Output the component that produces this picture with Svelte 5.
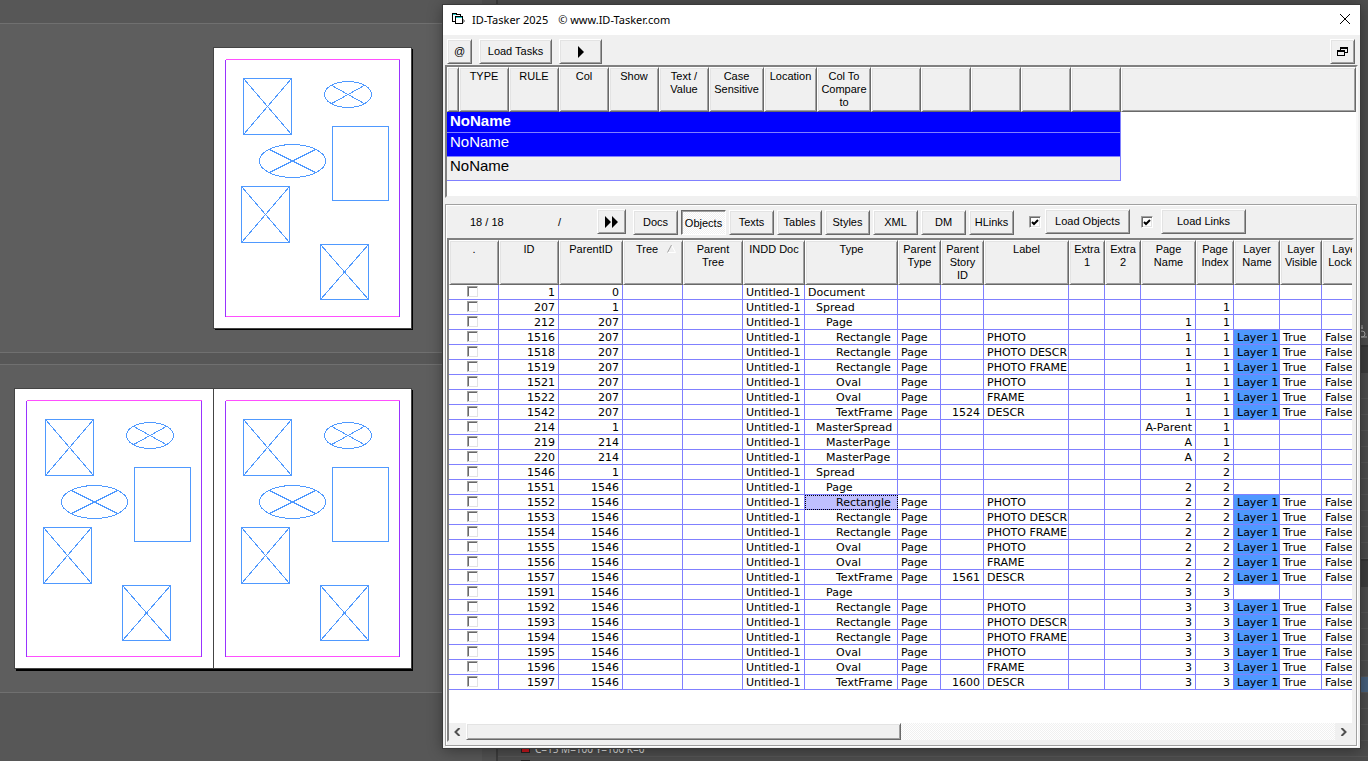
<script>
	const pageShapes = [
		{ kind: 'frame', x: 243, y: 78, w: 48, h: 56 },
		{ kind: 'oval', x: 324, y: 81, w: 47, h: 26 },
		{ kind: 'text', x: 332, y: 126, w: 56, h: 74 },
		{ kind: 'oval', x: 259, y: 144, w: 66, h: 33 },
		{ kind: 'frame', x: 241, y: 186, w: 48, h: 56 },
		{ kind: 'frame', x: 320, y: 244, w: 48, h: 55 },
	];

	const taskColumns = [
		['', 12], ['TYPE', 50], ['RULE', 50], ['Col', 50], ['Show', 50], ['Text / Value', 50],
		['Case Sensitive', 55], ['Location', 53], ['Col To Compare to', 54],
		['', 50], ['', 50], ['', 50], ['', 50], ['', 50],
	];

	const columns = [
		['.', 50], ['ID', 60], ['ParentID', 64], ['Tree', 60], ['Parent Tree', 60], ['INDD Doc', 62],
		['Type', 93], ['Parent Type', 43], ['Parent Story ID', 43], ['Label', 85], ['Extra 1', 36],
		['Extra 2', 36], ['Page Name', 55], ['Page Index', 38], ['Layer Name', 46],
		['Layer Visible', 42], ['Layer Locked', 48],
	];

	// id, parent id, level, type, story id, label, page name, page index
	const items = [
		[1, 0, 0, 'Document'],
		[207, 1, 1, 'Spread', '', '', '', 1],
		[212, 207, 2, 'Page', '', '', 1, 1],
		[1516, 207, 3, 'Rectangle', '', 'PHOTO', 1, 1],
		[1518, 207, 3, 'Rectangle', '', 'PHOTO DESCR', 1, 1],
		[1519, 207, 3, 'Rectangle', '', 'PHOTO FRAME', 1, 1],
		[1521, 207, 3, 'Oval', '', 'PHOTO', 1, 1],
		[1522, 207, 3, 'Oval', '', 'FRAME', 1, 1],
		[1542, 207, 3, 'TextFrame', 1524, 'DESCR', 1, 1],
		[214, 1, 1, 'MasterSpread', '', '', 'A-Parent', 1],
		[219, 214, 2, 'MasterPage', '', '', 'A', 1],
		[220, 214, 2, 'MasterPage', '', '', 'A', 2],
		[1546, 1, 1, 'Spread', '', '', '', 2],
		[1551, 1546, 2, 'Page', '', '', 2, 2],
		[1552, 1546, 3, 'Rectangle', '', 'PHOTO', 2, 2],
		[1553, 1546, 3, 'Rectangle', '', 'PHOTO DESCR', 2, 2],
		[1554, 1546, 3, 'Rectangle', '', 'PHOTO FRAME', 2, 2],
		[1555, 1546, 3, 'Oval', '', 'PHOTO', 2, 2],
		[1556, 1546, 3, 'Oval', '', 'FRAME', 2, 2],
		[1557, 1546, 3, 'TextFrame', 1561, 'DESCR', 2, 2],
		[1591, 1546, 2, 'Page', '', '', 3, 3],
		[1592, 1546, 3, 'Rectangle', '', 'PHOTO', 3, 3],
		[1593, 1546, 3, 'Rectangle', '', 'PHOTO DESCR', 3, 3],
		[1594, 1546, 3, 'Rectangle', '', 'PHOTO FRAME', 3, 3],
		[1595, 1546, 3, 'Oval', '', 'PHOTO', 3, 3],
		[1596, 1546, 3, 'Oval', '', 'FRAME', 3, 3],
		[1597, 1546, 3, 'TextFrame', 1600, 'DESCR', 3, 3],
	];

	const tabs = ['Docs', 'Objects', 'Texts', 'Tables', 'Styles', 'XML', 'DM', 'HLinks'];

	let tab = $state('Objects');
	let selected = $state(1552);
	let loadObjects = $state(true);
	let loadLinks = $state(true);
</script>

{#snippet page(dx, dy, left, bottom)}
	<g transform="translate({dx} {dy})">
		<rect class="paper" x={left} y="47" width={411 - left} height={bottom - 47} />
		<path class="margin-h" d="M{left + 12} 59H399M{left + 12} {bottom - 12}H399" />
		<path class="margin-v" d="M{left + 12} 59V{bottom - 12}M399 59V{bottom - 12}" />
		{#each pageShapes as s}
			{#if s.kind === 'oval'}
				<ellipse cx={s.x + s.w / 2} cy={s.y + s.h / 2} rx={s.w / 2} ry={s.h / 2} />
				<path
					d="M{s.x + s.w * 0.15} {s.y + s.h * 0.15}L{s.x + s.w * 0.85} {s.y + s.h * 0.85}M{s.x + s.w * 0.85} {s.y + s.h * 0.15}L{s.x + s.w * 0.15} {s.y + s.h * 0.85}"
				/>
			{:else}
				<rect x={s.x} y={s.y} width={s.w} height={s.h} />
				{#if s.kind === 'frame'}
					<path d="M{s.x} {s.y}l{s.w} {s.h}m0 {-s.h}l{-s.w} {s.h}" />
				{/if}
			{/if}
		{/each}
	</g>
{/snippet}

<div class="desktop">
	<div class="canvas">
		<div class="band first"></div>
		<svg class="board" width="443" height="328" viewBox="0 24 443 328">
			<rect class="shadow" x="215" y="49" width="198" height="281" />
			<g transform="translate(.5 .5)">{@render page(0, 0, 213, 328)}</g>
		</svg>
		<div class="band gutter"></div>
		<svg class="board" width="443" height="327" viewBox="0 365 443 327">
			<rect class="shadow" x="16" y="390" width="397" height="281" />
			<g transform="translate(.5 .5)">
				{@render page(-198, 341, 212, 327)}
				{@render page(0, 341, 213, 327)}
			</g>
		</svg>
		<div class="band last"></div>
	</div>
	<div class="track"></div>
	<div class="panel">
		<div class="panel-top">
			<svg width="14" height="16" viewBox="0 0 14 16">
				<path d="M4 2v6M4 5h5M8 2v4" />
				<circle cx="8" cy="11" r="3" />
				<path d="M3 14h10" />
			</svg>
		</div>
		<div class="panel-head"></div>
		<div class="panel-list tall">
			{#each Array(11) as _}<div class="swatch"></div>{/each}
		</div>
		<div class="panel-head"></div>
		<div class="panel-list">
			{#each Array(9) as _, i}<div class="swatch" class:current={i === 5}></div>{/each}
			<div class="swatch"><i></i>C=15 M=100 Y=100 K=0</div>
			<div class="swatch"><i class="dark"></i></div>
		</div>
	</div>

	<main class="window">
		<header class="titlebar">
			<svg class="logo" width="14" height="14" viewBox="0 0 14 14">
				<path d="M11 7h1v1h1v2h-1v1h-1z" fill="#999" />
				<path d="M.5 1.500h4v1h4v2h2v7h-7v-2h-3z" fill="#fff" stroke="#000" />
				<path d="M3.500 9.500v-5h7" fill="none" stroke="#000" />
				<path d="M1 2.500h3M4 5.500h6" stroke="#2cc" />
			</svg>
			<h1>ID-Tasker 2025</h1>
			<span>© www.ID-Tasker.com</span>
			<button class="close" aria-label="Close">
				<svg width="12" height="12" viewBox="0 0 12 12"><path d="M1 1l10 10M11 1L1 11" stroke="#000" /></svg>
			</button>
		</header>

		<div class="toolbar">
			<button class="btn square">@</button>
			<button class="btn load-tasks">Load Tasks</button>
			<button class="btn run" aria-label="Run">
				<svg width="8" height="12" viewBox="0 0 8 12"><path d="M1 0l6 6-6 6z" /></svg>
			</button>
			<button class="btn square restore" aria-label="Restore">
				<svg width="11" height="10" viewBox="0 0 11 10">
					<path d="M10.500 0v6M8 5.500h3M.500 3v6M7.500 3v6M0 8.500h8M3.500 0v3" fill="none" stroke="#000" />
					<path d="M3 0h8v2H3zM0 3h8v2H0z" />
				</svg>
			</button>
		</div>

		<section class="tasks">
			<div class="head-row">
				<table class="task-table">
					<colgroup>
						{#each taskColumns as [, width]}<col style="width: {width}px" />{/each}
					</colgroup>
					<thead>
						<tr>
							{#each taskColumns as [name]}<th>{name}</th>{/each}
						</tr>
					</thead>
					<tbody>
						<tr class="group"><td colspan="14">NoName</td></tr>
						<tr class="active"><td colspan="14">NoName</td></tr>
						<tr><td colspan="14">NoName</td></tr>
					</tbody>
				</table>
				<div class="filler"></div>
			</div>
		</section>

		<section class="objects">
			<div class="objects-bar">
				<span class="count">18 / 18</span>
				<span class="slash">/</span>
				<button class="btn forward" aria-label="Load next">
					<svg width="13" height="12" viewBox="0 0 13 12"><path d="M0 0l6 6-6 6zM7 0l6 6-6 6z" /></svg>
				</button>
				<div class="tabs">
					{#each tabs as name}
						<button class="btn tab" class:pressed={tab === name} onclick={() => (tab = name)}>{name}</button>
					{/each}
				</div>
				<input class="tick" type="checkbox" aria-label="Load Objects" bind:checked={loadObjects} />
				<button class="btn load">Load Objects</button>
				<input class="tick second" type="checkbox" aria-label="Load Links" bind:checked={loadLinks} />
				<button class="btn load">Load Links</button>
			</div>

			<div class="grid">
				<div class="grid-view">
					<table class="object-table">
						<colgroup>
							{#each columns as [, width]}<col style="width: {width}px" />{/each}
						</colgroup>
						<thead>
							<tr>
								{#each columns as [name]}
									<th class:sorted={name === 'Tree'}>
										{name}
										{#if name === 'Tree'}
											<svg width="9" height="8" viewBox="0 0 9 8">
												<path d="M4.500 0L8.500 7.500H0" stroke="#fff" />
												<path d="M.500 7.500L4.500 0" stroke="#a0a0a0" />
											</svg>
										{/if}
									</th>
								{/each}
							</tr>
						</thead>
						<tbody>
							{#each items as [id, parent, level, type, story, label, pageName, pageIndex]}
								<tr>
									<td class="tick-cell"><input class="row-tick" type="checkbox" aria-label="Select {id}" /></td>
									<td class="num">{id}</td>
									<td class="num">{parent}</td>
									<td></td>
									<td></td>
									<td>Untitled-1</td>
									<td class="level-{level}" class:selected={selected === id} onclick={() => (selected = id)}>{type}</td>
									<td>{level === 3 ? 'Page' : ''}</td>
									<td class="num">{story ?? ''}</td>
									<td>{label ?? ''}</td>
									<td></td>
									<td></td>
									<td class="num">{pageName ?? ''}</td>
									<td class="num">{pageIndex ?? ''}</td>
									<td class:layer={level === 3}>{level === 3 ? 'Layer 1' : ''}</td>
									<td>{level === 3 ? 'True' : ''}</td>
									<td>{level === 3 ? 'False' : ''}</td>
								</tr>
							{/each}
						</tbody>
					</table>
				</div>
				<div class="scroll">
					<button aria-label="Scroll left">
						<svg width="7" height="8" viewBox="0 0 7 8"><path d="M5.500 0L1.500 4l4 4" /></svg>
					</button>
					<div class="scroll-track"><div class="thumb"></div></div>
					<button aria-label="Scroll right">
						<svg width="7" height="8" viewBox="0 0 7 8"><path d="M1.500 0l4 4-4 4" /></svg>
					</button>
				</div>
			</div>
		</section>
	</main>
</div>

<style>
	:global(body) {
		margin: 0;
		background: #575757;
	}

	* {
		box-sizing: border-box;
	}

	.desktop {
		position: relative;
		display: grid;
		grid-template-columns: 482px 16px 1fr;
		height: 100vh;
		overflow: hidden;
		background: #4d4d4d;
		font-family: "Liberation Sans", Arial, sans-serif;
		font-size: 11px;
		color: #000;
	}

	.canvas {
		display: flex;
		flex-direction: column;
		background: #5e5e5e;
	}

	.band {
		background: #575757;
		flex: none;
	}

	.band.first {
		height: 24px;
		border-bottom: 1px solid #707070;
	}

	.band.gutter {
		height: 13px;
		border-top: 1px solid #707070;
		border-bottom: 1px solid #707070;
	}

	.band.last {
		flex: 1;
		border-top: 1px solid #707070;
	}

	.board {
		display: block;
		flex: none;
		fill: none;
		stroke: #4f99ff;
		shape-rendering: crispEdges;
	}

	.board .shadow {
		fill: #000;
		stroke: none;
	}

	.board .paper {
		fill: #fff;
		stroke: #444;
	}

	.margin-h {
		stroke: #ff4fff;
	}

	.margin-v {
		stroke: #9933ff;
	}

	.track {
		background: #515151;
		border-right: 2px solid #3c3c3c;
	}

	.panel {
		display: flex;
		flex-direction: column;
		overflow: hidden;
	}

	.panel-top {
		flex: none;
		display: flex;
		justify-content: flex-end;
		align-items: flex-end;
		height: 345px;
		padding-bottom: 6px;
	}

	.panel-top svg {
		fill: none;
		stroke: #aaa;
	}

	.panel-head {
		flex: none;
		height: 28px;
		background: #3d3d3d;
		border-top: 2px solid #353535;
	}

	.panel-list {
		flex: none;
		padding-top: 10px;
	}

	.panel-list.tall {
		height: 186px;
		overflow: hidden;
	}

	.swatch {
		display: flex;
		align-items: center;
		gap: 5px;
		height: 16px;
		padding-left: 23px;
		border-bottom: 1px solid #565656;
		color: #ddd;
		font: 10px/16px "Noto Sans", sans-serif;
	}

	.swatch.current {
		background: #46607d;
	}

	.swatch i {
		width: 9px;
		height: 9px;
		background: #c4161c;
		border: 1px solid #222;
	}

	.swatch i.dark {
		background: #333;
	}

	.window {
		position: absolute;
		top: 5px;
		right: 8px;
		bottom: 13px;
		left: 443px;
		display: flex;
		flex-direction: column;
		background: #f0f0f0;
		box-shadow: 0 0 0 1px #3a3a3a, 0 2px 14px rgba(0, 0, 0, 0.4);
	}

	.titlebar {
		flex: none;
		display: flex;
		align-items: center;
		height: 30px;
		padding: 0 9px 2px;
		background: #fff;
		font-family: "Noto Sans", sans-serif;
		font-size: 11px;
	}

	.logo {
		margin-right: 6px;
		shape-rendering: crispEdges;
	}

	h1 {
		margin: 0 10px 0 0;
		font-size: 11px;
		font-weight: 400;
	}

	.close {
		display: flex;
		margin-left: auto;
		padding: 0;
		border: 0;
		background: none;
	}

	.btn {
		display: flex;
		align-items: center;
		justify-content: center;
		flex: none;
		height: 25px;
		padding: 0;
		border: 1px solid;
		border-color: #fff #696969 #696969 #fff;
		box-shadow: inset 1px 1px #e3e3e3, inset -1px -1px #a0a0a0;
		background: #f0f0f0;
		font: 11px/13px "Liberation Sans", Arial, sans-serif;
		color: #000;
		white-space: nowrap;
	}

	.toolbar {
		flex: none;
		display: flex;
		gap: 7px;
		height: 30px;
		padding: 4px 5px 1px 4px;
	}

	.btn.square {
		width: 25px;
	}

	.btn.load-tasks {
		width: 73px;
	}

	.btn.run {
		width: 43px;
	}

	.btn.restore {
		margin-left: auto;
	}

	.tasks {
		flex: none;
		height: 133px;
		margin: 0 2px;
		border: 2px solid;
		border-color: #808080 #f8f8f8 #f0f0f0 #808080;
		background: #fff;
	}

	.head-row {
		display: flex;
	}

	.filler {
		flex: 1;
		height: 45px;
	}

	table {
		flex: none;
		table-layout: fixed;
		border-collapse: separate;
		border-spacing: 0;
	}

	th,
	.filler {
		border: 1px solid;
		border-color: #fff #696969 #696969 #fff;
		box-shadow: inset 1px 1px #e3e3e3, inset -1px -1px #a0a0a0;
		background: #f0f0f0;
	}

	th {
		height: 45px;
		padding: 2px 1px 0;
		font-weight: 400;
		line-height: 13px;
		vertical-align: top;
		text-align: center;
	}

	.task-table {
		width: 674px;
	}

	.task-table td {
		height: 24px;
		padding: 0 3px;
		border-right: 1px solid #8080ff;
		border-bottom: 1px solid #8080ff;
		background: #f0f0f0;
		font-size: 15px;
		line-height: 18px;
		vertical-align: top;
	}

	.task-table .group td,
	.task-table .active td {
		background: #00f;
		color: #fff;
	}

	.task-table .group td {
		height: 21px;
		font-weight: 700;
	}

	.objects {
		flex: 1;
		display: flex;
		flex-direction: column;
		min-height: 0;
		margin: 6px 3px 2px 2px;
		padding: 0 2px 3px 1px;
		border: 1px solid #a0a0a0;
		box-shadow: inset 1px 1px #fff, 1px 1px #fff;
	}

	.objects-bar {
		flex: none;
		display: flex;
		align-items: center;
		height: 33px;
		padding-left: 23px;
	}

	.count {
		width: 88px;
	}

	.slash {
		width: 39px;
	}

	.forward {
		width: 29px;
	}

	.tabs {
		display: flex;
		gap: 3px;
		margin: 2px 15px 0 7px;
	}

	.tab {
		width: 45px;
	}

	.tab.pressed {
		border-color: #696969 #fff #fff #696969;
		box-shadow: inset 1px 1px #a0a0a0;
		background: repeating-conic-gradient(#fff 0 25%, #f0f0f0 0 50%) 0 0 / 2px 2px;
		padding-top: 2px;
	}

	.load {
		width: 85px;
	}

	input {
		appearance: none;
		flex: none;
		margin: 0;
		background: #fff;
	}

	.tick {
		width: 12px;
		height: 12px;
		margin-right: 4px;
		border: 1px solid;
		border-color: #a0a0a0 #fff #fff #a0a0a0;
		box-shadow: inset 1px 1px #696969, inset -1px -1px #e3e3e3;
	}

	.tick.second {
		margin: 0 8px 0 11px;
	}

	.tick:checked {
		background: #fff url("data:image/svg+xml,%3Csvg xmlns='http://www.w3.org/2000/svg' viewBox='0 0 10 10'%3E%3Cpath d='M2 5l2 2 4-4' fill='none' stroke='%23000' stroke-width='2'/%3E%3C/svg%3E") center / 10px 10px;
	}

	.grid {
		flex: 1;
		display: flex;
		flex-direction: column;
		min-height: 0;
		border: 2px solid;
		border-color: #808080 #f0f0f0 #f0f0f0 #808080;
		background: #fff;
	}

	.grid-view {
		flex: 1;
		min-height: 0;
		overflow: hidden;
	}

	.object-table {
		width: 921px;
	}

	th.sorted {
		padding-left: 12px;
		text-align: left;
		white-space: nowrap;
	}

	.sorted svg {
		margin-left: 6px;
		fill: none;
	}

	.object-table td {
		height: 15px;
		padding: 2px 3px 0;
		border-right: 1px solid #8080ff;
		border-bottom: 1px solid #8080ff;
		font: 11px/12px "DejaVu Sans", sans-serif;
		white-space: nowrap;
	}

	.object-table .num {
		text-align: right;
	}

	.object-table .level-1 {
		padding-left: 11px;
	}

	.object-table .level-2 {
		padding-left: 21px;
	}

	.object-table .level-3 {
		padding-left: 31px;
		padding-right: 0;
	}

	.object-table .layer {
		background: #4f99ff;
	}

	.object-table .selected {
		background: #c0c0ff;
		outline: 1px dotted #000;
		outline-offset: -1px;
	}

	.object-table .tick-cell {
		padding-top: 1px;
		vertical-align: top;
	}

	.row-tick {
		display: block;
		width: 11px;
		height: 11px;
		margin-left: 15px;
		border: 1px solid;
		border-color: #a0a0a0 #e3e3e3 #e3e3e3 #a0a0a0;
		box-shadow: inset 1px 1px #696969;
	}

	.row-tick:checked {
		background: #000;
	}

	.scroll {
		flex: none;
		display: flex;
		height: 17px;
		background: repeating-conic-gradient(#fff 0 25%, #f0f0f0 0 50%) 0 0 / 2px 2px;
	}

	.scroll button {
		display: flex;
		align-items: center;
		justify-content: center;
		width: 17px;
		padding: 0;
		border: 0;
		background: #f0f0f0;
	}

	.scroll button path {
		fill: none;
		stroke: #505050;
		stroke-width: 2;
	}

	.scroll-track {
		flex: 1;
	}

	.thumb {
		width: 50%;
		height: 17px;
		border: 1px solid;
		border-color: #fff #696969 #696969 #fff;
		box-shadow: inset 1px 1px #e3e3e3, inset -1px -1px #a0a0a0;
		background: #f0f0f0;
	}
</style>
